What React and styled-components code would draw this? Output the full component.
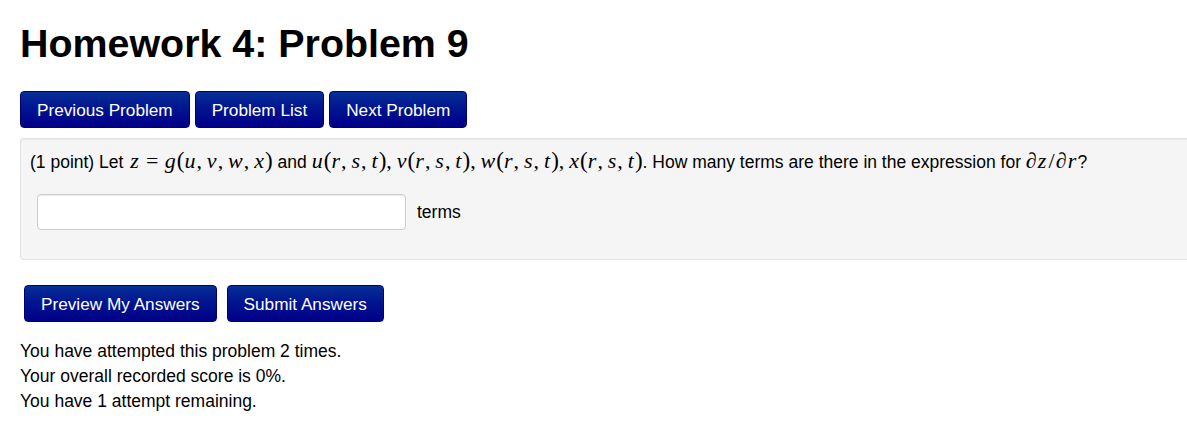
import React from "react";
import styled, { createGlobalStyle } from "styled-components";

const GlobalStyle = createGlobalStyle`
  html, body {
    margin: 0;
    padding: 0;
    background: #ffffff;
    overflow: hidden;
  }
  body {
    font-family: "Liberation Sans", Arial, sans-serif;
    font-size: 17.5px;
    color: #000000;
  }
`;

const Page = styled.div`
  padding-left: 20px;
`;

const Title = styled.h1`
  margin: 22px 0 0;
  font-size: 39.4px;
  line-height: 43px;
  font-weight: 700;
  color: #000;
`;

const ButtonRow = styled.div`
  display: flex;
  gap: ${(p) => p.$gap}px;
  margin-top: ${(p) => p.$top}px;
  margin-left: ${(p) => p.$left || 0}px;
`;

const Button = styled.button`
  height: 37px;
  padding: 0 16px;
  border: 1px solid #00006a;
  border-radius: 4px;
  background: linear-gradient(to bottom, #072f96 0%, #001590 45%, #000088 100%);
  color: #ffffff;
  font-family: "Liberation Sans", Arial, sans-serif;
  font-size: 17.2px;
  line-height: 20px;
  cursor: pointer;
  white-space: nowrap;
`;

const Panel = styled.div`
  margin-top: 10px;
  width: calc(100% + 20px);
  box-sizing: border-box;
  background: #f5f5f5;
  border: 1px solid #e3e3e3;
  border-right: none;
  border-radius: 4px 0 0 4px;
  box-shadow: inset 0 1px 1px rgba(0, 0, 0, 0.05);
  padding: 10px 0 29px 9px;
`;

const Question = styled.p`
  margin: 0;
  line-height: 25px;
  white-space: nowrap;
`;

const MathSpan = styled.span`
  font-family: "Liberation Serif", "Times New Roman", serif;
  font-size: 22px;
  line-height: 1;
  white-space: nowrap;
  margin-left: ${(p) => p.$lead || 0}px;
`;

const Var = styled.span`
  font-style: italic;
  margin-right: 0.05em;
`;

const Paren = styled.span`
  font-style: normal;
  font-size: 1.05em;
`;

const Comma = styled.span`
  font-style: normal;
  margin-right: 0.22em;
`;

const Rel = styled.span`
  font-style: normal;
  margin: 0 0.28em;
`;

const Slash = styled.span`
  font-style: normal;
  margin: 0 0.05em;
`;

const AnswerRow = styled.div`
  display: flex;
  align-items: center;
  gap: 11px;
  margin: 19px 0 0 7px;
`;

const AnswerInput = styled.input`
  width: 369px;
  height: 36px;
  box-sizing: border-box;
  border: 1px solid #cccccc;
  border-radius: 4px;
  background: #ffffff;
  box-shadow: inset 0 1px 1px rgba(0, 0, 0, 0.075);
  padding: 4px 6px;
  font-family: "Liberation Sans", Arial, sans-serif;
  font-size: 17px;
  outline: none;
`;

const Unit = styled.span`
  font-size: 17.5px;
  line-height: 25px;
`;

const Status = styled.div`
  margin-top: 17px;
  line-height: 25px;
`;

const StatusLine = styled.div``;

function M({ tex, lead }) {
  const parts = [];
  [...tex].forEach((ch, i) => {
    if (ch === "(" || ch === ")") parts.push(<Paren key={i}>{ch}</Paren>);
    else if (ch === ",") parts.push(<Comma key={i}>,</Comma>);
    else if (ch === "=") parts.push(<Rel key={i}>=</Rel>);
    else if (ch === "/") parts.push(<Slash key={i}>/</Slash>);
    else parts.push(<Var key={i}>{ch}</Var>);
  });
  return <MathSpan $lead={lead}>{parts}</MathSpan>;
}

export default function App() {
  return (
    <>
      <GlobalStyle />
      <Page>
        <Title>Homework 4: Problem 9</Title>
        <ButtonRow $gap={5} $top={26}>
          <Button>Previous Problem</Button>
          <Button>Problem List</Button>
          <Button>Next Problem</Button>
        </ButtonRow>
        <Panel>
          <Question>
            (1 point) Let <M tex="z=g(u,v,w,x)" lead={2} /> and{" "}
            <M tex="u(r,s,t),v(r,s,t),w(r,s,t),x(r,s,t)" />. How many terms are
            there in the expression for <M tex="∂z/∂r" />?
          </Question>
          <AnswerRow>
            <AnswerInput type="text" aria-label="answer" />
            <Unit>terms</Unit>
          </AnswerRow>
        </Panel>
        <ButtonRow $gap={10} $top={25} $left={4}>
          <Button>Preview My Answers</Button>
          <Button>Submit Answers</Button>
        </ButtonRow>
        <Status>
          <StatusLine>You have attempted this problem 2 times.</StatusLine>
          <StatusLine>Your overall recorded score is 0%.</StatusLine>
          <StatusLine>You have 1 attempt remaining.</StatusLine>
        </Status>
      </Page>
    </>
  );
}
